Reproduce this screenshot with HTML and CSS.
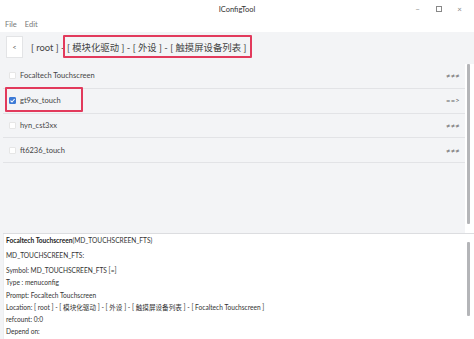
FILE: index.html
```html
<!DOCTYPE html>
<html>
<head>
<meta charset="utf-8">
<link rel="stylesheet" href="styles.css">
</head>
<body>
<div class="window">
  <div class="titlebar">
    <div></div>
    <div class="title">IConfigTool</div>
    <div class="controls">
      <span class="ctl">&#8211;</span>
      <span class="ctl max"></span>
      <span class="ctl">&#215;</span>
    </div>
  </div>
  <div class="menubar"><span>File</span><span>Edit</span></div>
  <div class="main">
    <div class="toolbar">
      <div class="back">&lt;</div>
      <div class="crumbs">[ root ] - [ 模块化驱动 ] - [ 外设 ] - [ 触摸屏设备列表 ]</div>
      <div class="mark mark-crumb"></div>
    </div>
    <div class="listpanel">
      <div class="rows">
        <div class="row"><span class="cb"></span><span class="name">Focaltech Touchscreen</span><span class="val">&#8800;&#8800;&#8800;</span></div>
        <div class="row"><span class="cb on"><svg viewBox="0 0 7 7" width="7" height="7"><path d="M1.5 3.6 L3 5 L5.6 2" fill="none" stroke="#fff" stroke-width="1.1"/></svg></span><span class="name">gt9xx_touch</span><span class="val">==&gt;</span></div>
        <div class="row"><span class="cb"></span><span class="name">hyn_cst3xx</span><span class="val">&#8800;&#8800;&#8800;</span></div>
        <div class="row"><span class="cb"></span><span class="name">ft6236_touch</span><span class="val">&#8800;&#8800;&#8800;</span></div>
        <div class="mark mark-row"></div>
      </div>
      <div class="scroll"><div class="handle h1"></div></div>
    </div>
    <div class="detail">
      <div class="text">
        <p class="head"><b>Focaltech Touchscreen</b>(MD_TOUCHSCREEN_FTS)</p>
        <p class="sym">MD_TOUCHSCREEN_FTS:</p>
        <p class="info">Symbol: MD_TOUCHSCREEN_FTS [=]<br>Type : menuconfig<br>Prompt: Focaltech Touchscreen<br>Location: [ root ] - [ 模块化驱动 ] - [ 外设 ] - [ 触摸屏设备列表 ] - [ Focaltech Touchscreen ]<br>refcount: 0:0<br>Depend on:</p>
      </div>
      <div class="scroll white"><div class="handle h2"></div></div>
    </div>
  </div>
</div>
</body>
</html>
```
FILE: styles.css
```css
* { box-sizing: border-box; }
html, body { margin: 0; padding: 0; }
body {
  width: 474px; height: 339px; overflow: hidden;
  font-family: Lato, "Noto Sans CJK SC", sans-serif;
  color: #3a3a3a;
  background: #fff;
}
.window { display: flex; flex-direction: column; height: 339px; }
.titlebar {
  height: 17px; flex-shrink: 0;
  display: grid;
  grid-template-columns: 1fr auto 1fr;
  align-items: center;
  font-size: 7.5px;
  background: #fff;
}
.title { color: #333; padding-top: 1px; }
.controls { display: flex; justify-content: flex-end; align-items: center; padding-right: 4px; }
.ctl { width: 21px; text-align: center; color: #888; font-size: 8px; line-height: 10px; }
.ctl.max { width: 6px; height: 6px; border: 1px solid #888; margin: 0 7.5px; }
.menubar {
  height: 15px; flex-shrink: 0; display: flex; gap: 8px; padding-left: 5px;
  align-items: center; font-size: 7.5px; color: #777;
}
.main { flex: 1; min-height: 0; background: #f3f4f6; display: flex; flex-direction: column; }
.toolbar {
  position: relative; flex-shrink: 0;
  height: 32px;
  display: flex; align-items: center; gap: 8px;
  padding: 0 0 3px 6px;
}
.back {
  width: 17px; height: 22px; background: #fff; border: 1px solid #e3e4e6;
  display: flex; align-items: center; justify-content: center;
  font-size: 7px; color: #555;
}
.crumbs { font-size: 9.4px; color: #444; white-space: nowrap; }
.mark { position: absolute; border: 2px solid #e23a5c; border-radius: 1px; }
.mark-crumb { left: 63px; top: 3px; width: 189px; height: 23px; }
.listpanel {
  height: 170px; flex-shrink: 0; display: flex; margin-left: 3px;
  border-bottom: 1px solid #dcdde0;
}
.rows { flex: 1; position: relative; }
.row {
  height: 24.8px; display: flex; align-items: center;
  border-bottom: 1.5px solid #e2e3e6;
  font-size: 7.5px; color: #444;
  padding: 0 5px 0 6px;
}
.cb {
  width: 7px; height: 7px; background: #fff; border: 1px solid #e6e6e6;
  margin-right: 4px; display: flex; border-radius: 1px;
}
.cb.on { background: #3d7ad6; border-color: #3d7ad6; }
.cb svg { display: block; margin: -1px; }
.name { flex: 1; }
.val { font-size: 7.5px; color: #666; letter-spacing: 0.3px; }
.mark-row { left: 2px; top: 23px; width: 78px; height: 25px; }
.scroll { width: 9px; background: #fff; position: relative; }
.handle { position: absolute; left: 2px; width: 3px; background: #b4b5b8; border-radius: 1px; }
.h1 { top: 0; height: 160px; }
.detail { flex: 1; min-height: 0; display: flex; background: #fff; margin-left: 3px; border-left: 1px solid #eceef0; }
.detail .text { flex: 1; padding: 0 0 0 2px; font-size: 6.6px; color: #333; white-space: nowrap; overflow: hidden; }
.detail p { margin: 0; }
.head { line-height: 13px; }
.head b { font-weight: 700; color: #222; }
.sym { margin-top: 2px !important; line-height: 13px; }
.info { margin-top: 2px !important; line-height: 12.3px; }
.h2 { top: 8px; height: 74px; }
```
